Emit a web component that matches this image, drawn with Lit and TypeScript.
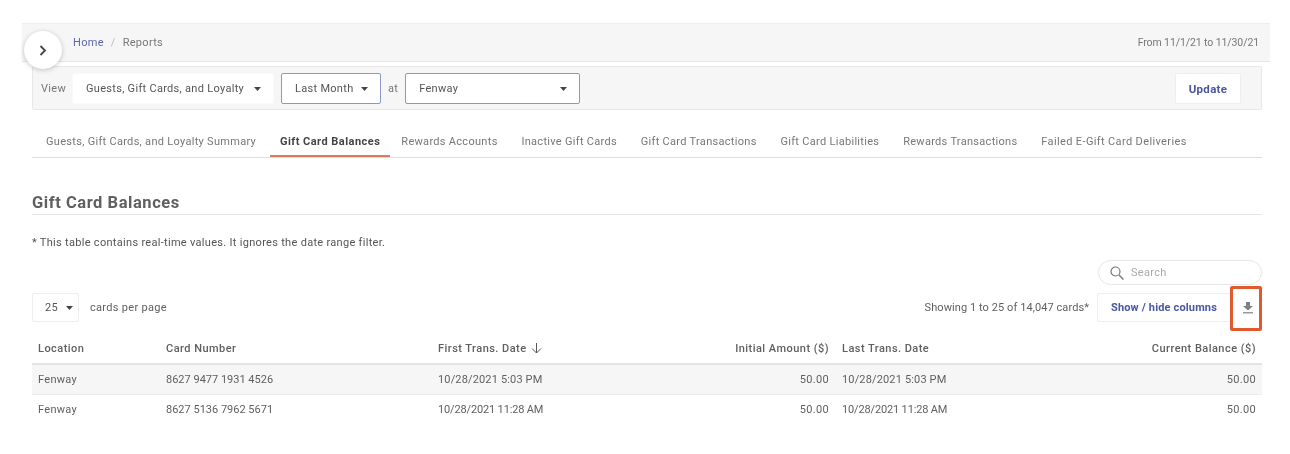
import { LitElement, html, css } from "lit";
import { customElement } from "lit/decorators.js";

const caret = html`<svg class="caret" width="7" height="4" viewBox="0 0 7 4"><path d="M0 0h7L3.5 4z" fill="#444"/></svg>`;
const tabs = ["Guests, Gift Cards, and Loyalty Summary", "Gift Card Balances", "Rewards Accounts", "Inactive Gift Cards", "Gift Card Transactions", "Gift Card Liabilities", "Rewards Transactions", "Failed E-Gift Card Deliveries"];
const rows = [
  ["Fenway", "8627 9477 1931 4526", "10/28/2021 5:03 PM", "50.00", "10/28/2021 5:03 PM", "50.00"],
  ["Fenway", "8627 5136 7962 5671", "10/28/2021 11:28 AM", "50.00", "10/28/2021 11:28 AM", "50.00"],
];

@customElement("app-root")
export class AppRoot extends LitElement {
  static styles = css`
    :host { display: block; width: 1290px; height: 454px; overflow: hidden; background: #fff; font-family: Roboto, "Liberation Sans", sans-serif; font-size: 11px; color: #5f5f5f; letter-spacing: 0.3px; filter: blur(0.4px); }
    .page { padding: 23px 20px 0 22px; }
    .crumbs { height: 37px; background: #f6f6f6; border-top: 1px solid #eee; border-bottom: 1px solid #e6e6e6; display: flex; justify-content: space-between; padding: 0 11px 0 51px; position: relative; line-height: 37px; color: #777; }
    .crumbs a { color: #5a66a8; }
    .sep { color: #bbb; margin: 0 7px; }
    .range { letter-spacing: -0.1px; font-size: 10.5px; }
    .toggle { position: absolute; left: 2px; top: 7px; width: 38px; height: 38px; border-radius: 50%; background: #fff; box-shadow: 0 1px 5px rgba(0,0,0,.22); display: flex; align-items: center; justify-content: center; }
    .inner { margin-left: 10px; margin-right: -12px; width: 1230px; }
    .filter { margin-top: 4px; height: 44px; box-sizing: border-box; background: #f6f6f6; border: 1px solid #e8e8e8; border-radius: 2px; display: flex; align-items: center; padding: 1px 20px 0 8px; color: #777; }
    .sel { height: 31px; box-sizing: border-box; background: #fff; border-radius: 2px; display: flex; align-items: center; justify-content: space-between; color: #555; padding: 0 12px 0 13px; border: 1px solid #fafafa; }
    .sel.on { border-color: #8d97c4; }
    .s1 { width: 202px; margin-left: 6px; }
    .s2 { width: 100px; margin-left: 7px; }
    .s3 { width: 175px; }
    .at { margin: 0 7px; }
    .update { margin-left: auto; width: 66px; height: 31px; box-sizing: border-box; background: #fff; border: 1px solid #eee; border-radius: 2px; color: #4a57a0; font-weight: 700; font-size: 11.5px; display: flex; align-items: center; justify-content: center; }
    .tabs { margin-top: 16px; height: 31px; border-bottom: 1px solid #ddd; display: flex; padding-left: 14px; }
    .tab { line-height: 32px; color: #777; margin-right: 23.8px; white-space: nowrap; }
    .tab.last { letter-spacing: 0.37px; }
    .tab.on { color: #444; font-weight: 700; letter-spacing: 0.47px; margin-left: -10px; margin-right: 11px; padding: 0 10px; height: 31px; border-bottom: 2px solid #e0765a; box-sizing: border-box; }
    h2 { margin: 34px 0 0; font-size: 16.5px; line-height: 22px; height: 22px; font-weight: 700; color: #5f5f5f; border-bottom: 1px solid #e6e6e6; letter-spacing: 0.55px; }
    .note { margin-top: 21px; line-height: 14px; color: #555; }
    .search-row { display: flex; justify-content: flex-end; margin-top: 10px; }
    .search { width: 164px; height: 25px; box-sizing: border-box; border: 1px solid #e6e6e6; border-radius: 13px; display: flex; align-items: center; gap: 7px; padding-left: 11px; color: #aaa; }
    .tools { display: flex; align-items: center; margin-top: 8px; height: 29px; }
    .per { width: 47px; height: 29px; box-sizing: border-box; border: 1px solid #eee; border-radius: 2px; display: flex; align-items: center; gap: 8px; padding-left: 12px; color: #555; }
    .per-l { margin-left: 11px; margin-right: auto; }
    .count { letter-spacing: 0.08px; }
    .show { margin-left: 8px; width: 134px; height: 29px; box-sizing: border-box; border: 1px solid #eee; border-radius: 2px; color: #4a57a0; font-weight: 700; letter-spacing: 0.15px; display: flex; align-items: center; justify-content: center; }
    .dl { width: 32px; height: 45px; box-sizing: border-box; border: 3px solid #e2592d; border-radius: 2px; display: flex; align-items: center; justify-content: center; padding-left: 4px; margin-left: -1px; margin-top: 1px; flex: none; }
    .row { display: grid; grid-template-columns: 128px 272px 280px 124px 200px 1fr; height: 29px; align-items: center; border-bottom: 1px solid #ececec; }
    .row > div { padding: 0 6px; white-space: nowrap; }
    .row > .amt { padding-right: 7px; }
    .r { text-align: right; }
    .head { margin-top: 12px; height: 29px; font-weight: 500; color: #5f5f5f; letter-spacing: 0.46px; border-bottom: 2px solid #e4e4e4; }
    .row.alt { background: #f6f6f6; }
    .row.last { border-bottom: 0; }
    .num { letter-spacing: 0; }
    .d0 { letter-spacing: 0.15px; }
    .d1 { letter-spacing: -0.15px; }
    .arrow { vertical-align: -2px; margin-left: 1px; }
  `;

  render() {
    return html`<div class="page">
      <div class="crumbs">
        <div><a>Home</a><span class="sep">/</span>Reports</div>
        <div class="range">From 11/1/21 to 11/30/21</div>
        <div class="toggle"><svg width="8" height="11" viewBox="0 0 8 11"><path d="M1.5 1l4.5 4.5L1.5 10" fill="none" stroke="#444" stroke-width="1.8"/></svg></div>
      </div>
      <div class="inner">
        <div class="filter">
          View
          <div class="sel s1">Guests, Gift Cards, and Loyalty ${caret}</div>
          <div class="sel on s2">Last Month ${caret}</div>
          <span class="at">at</span>
          <div class="sel on s3">Fenway ${caret}</div>
          <div class="update">Update</div>
        </div>
        <div class="tabs">
          ${tabs.map((t, i) => html`<div class="tab ${i === 1 ? "on" : ""} ${i === 7 ? "last" : ""}">${t}</div>`)}
        </div>
        <h2>Gift Card Balances</h2>
        <div class="note">* This table contains real-time values. It ignores the date range filter.</div>
        <div class="search-row"><div class="search">
          <svg width="14" height="14" viewBox="0 0 14 14"><circle cx="5.5" cy="5.5" r="4.5" fill="none" stroke="#777" stroke-width="1.2"/><path d="M9 9l4.5 4.5" stroke="#777" stroke-width="1.4"/></svg>
          Search</div></div>
        <div class="tools">
          <div class="per">25 ${caret}</div>
          <span class="per-l">cards per page</span>
          <span class="count">Showing 1 to 25 of 14,047 cards*</span>
          <div class="show">Show / hide columns</div>
          <div class="dl"><svg width="10" height="12" viewBox="0 0 10 12"><path d="M3 0h4v4h3L5 8.5 0 4h3z" fill="#808080"/><rect y="10" width="10" height="1.5" fill="#999"/></svg></div>
        </div>
        <div class="row head">
          <div>Location</div><div>Card Number</div>
          <div>First Trans. Date <svg class="arrow" width="11" height="11" viewBox="0 0 11 11"><path d="M5.5 0v10M1 5.5L5.5 10 10 5.5" fill="none" stroke="#555" stroke-width="1"/></svg></div>
          <div class="r amt">Initial Amount ($)</div>
          <div>Last Trans. Date</div>
          <div class="r">Current Balance ($)</div>
        </div>
        ${rows.map((r, i) => html`<div class="row ${i === 0 ? "alt" : "last"}">
          <div>${r[0]}</div><div class="num">${r[1]}</div><div class="d${i}">${r[2]}</div><div class="r amt">${r[3]}</div><div class="d${i}">${r[4]}</div><div class="r">${r[5]}</div>
        </div>`)}
      </div>
    </div>`;
  }
}
